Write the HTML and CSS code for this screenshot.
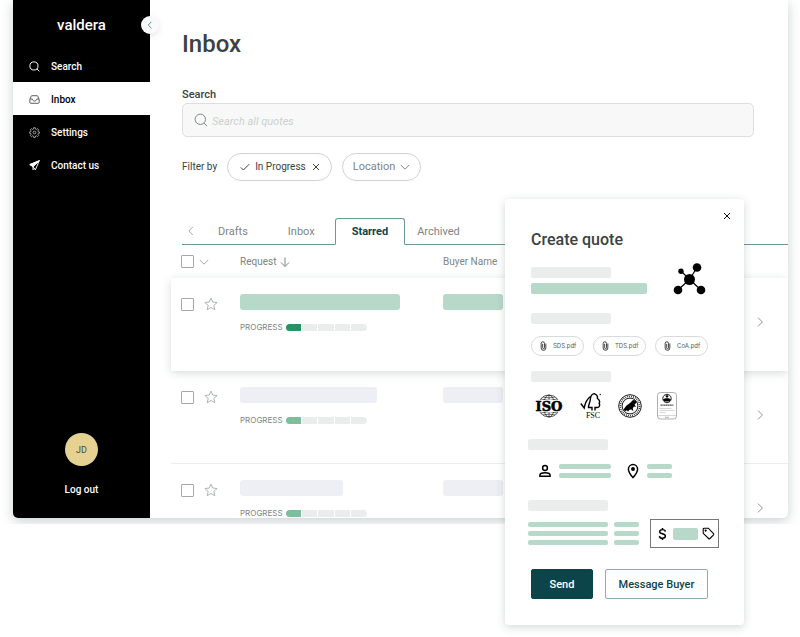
FILE: index.html
```html
<!DOCTYPE html>
<html lang="en">
<head>
    <meta charset="UTF-8">
    <meta name="viewport" content="width=device-width, initial-scale=1.0">
    <title>valdera - Inbox</title>
    <link rel="stylesheet" href="styles.css">
</head>
<body>
    <!-- shared icons -->
    <svg class="sprite" aria-hidden="true">
        <symbol id="i-search" viewBox="0 0 16 16"><circle cx="7.2" cy="7.2" r="5.9"/><path d="M11.4 11.4l3.6 3.6"/></symbol>
        <symbol id="i-star" viewBox="0 0 16 16"><path d="M8 1.2l2 4.6 5 .5-3.8 3.3 1.1 4.9L8 12l-4.3 2.5 1.1-4.9L1 6.3l5-.5z"/></symbol>
        <symbol id="i-left" viewBox="0 0 10 10"><path d="M6.8 1L2.8 5l4 4"/></symbol>
        <symbol id="i-right" viewBox="0 0 10 10"><path d="M3 .6L7.4 5 3 9.4"/></symbol>
        <symbol id="i-down" viewBox="0 0 10 10"><path d="M.8 3L5 7.2 9.2 3"/></symbol>
        <symbol id="i-close" viewBox="0 0 10 10"><path d="M2 2l6 6M8 2L2 8"/></symbol>
        <symbol id="i-clip" viewBox="0 0 8 12"><path d="M6.8 3v5.4a2.8 2.8 0 0 1-5.6 0V2.9a2 2 0 0 1 4 0v5.2a1.1 1.1 0 0 1-2.2 0V3.4"/></symbol>
    </svg>

    <div class="stage">
        <div class="app">
            <aside class="sidebar">
                <div class="logo">valdera</div>
                <button class="collapse" type="button" aria-label="Collapse menu"><svg class="icon"><use href="#i-left"/></svg></button>

                <nav class="menu">
                    <a class="menu-item" href="#"><svg class="icon"><use href="#i-search"/></svg>Search</a>
                    <a class="menu-item active" href="#">
                        <svg class="icon thin" viewBox="0 0 16 16"><path d="M1.2 8.2l2-5a1 1 0 0 1 1-.7h7.6a1 1 0 0 1 1 .7l2 5v4a1.3 1.3 0 0 1-1.3 1.3h-11a1.3 1.3 0 0 1-1.3-1.3zM1.2 7.4h3.6c.3 2 1.6 2.8 3.2 2.8s2.9-.8 3.2-2.8h3.6"/></svg>Inbox</a>
                    <a class="menu-item" href="#">
                        <svg class="icon thin" viewBox="0 0 16 16"><circle cx="8" cy="8" r="2"/><path d="M6.9 1h2.2l.4 2 1.3.6 1.7-1.2 1.6 1.6-1.2 1.7.5 1.2 2 .4v1.6l-2 .4-.5 1.3 1.2 1.7-1.6 1.6-1.7-1.2-1.3.5-.4 2H6.9l-.4-2-1.3-.5-1.7 1.2-1.6-1.6 1.2-1.7-.5-1.3-2-.4V7.3l2-.4.5-1.2L1.9 4l1.6-1.6 1.7 1.2L6.5 3z"/></svg>Settings</a>
                    <a class="menu-item" href="#">
                        <svg class="icon" viewBox="0 0 16 16"><path d="M15 1L1.2 6.6l4.6 3 3.4 4.8zM15 1L5.8 9.6v4.6l2-2"/><path class="solid" d="M15 1L5.800 9.600 1.200 6.600z"/></svg>Contact us</a>
                </nav>

                <div class="account">
                    <div class="avatar">JD</div>
                    <a class="logout" href="#">Log out</a>
                </div>
            </aside>

            <main class="main">
                <div class="toolbar">
                    <h1>Inbox</h1>
                    <label class="search-label" for="search">Search</label>
                    <div class="search-box">
                        <svg class="icon"><use href="#i-search"/></svg>
                        <input type="search" id="search" placeholder="Search all quotes">
                    </div>
                    <div class="filters">
                        <span>Filter by</span>
                        <button class="filter" type="button">
                            <svg class="icon" viewBox="0 0 10 10"><path d="M.8 5.4L3.400 8 9.200 2.200"/></svg>
                            In Progress
                            <svg class="icon"><use href="#i-close"/></svg>
                        </button>
                        <button class="filter location" type="button">Location <svg class="icon"><use href="#i-down"/></svg></button>
                    </div>
                </div>

                <nav class="tabs">
                    <a class="tab prev" href="#" aria-label="Previous"><svg class="icon"><use href="#i-left"/></svg></a>
                    <a class="tab" href="#">Drafts</a>
                    <a class="tab" href="#">Inbox</a>
                    <a class="tab active" href="#">Starred</a>
                    <a class="tab last" href="#">Archived</a>
                </nav>

                <table class="quotes">
                    <thead>
                        <tr>
                            <th class="col-pick"><div class="pick"><input type="checkbox" aria-label="Select all"><svg class="icon"><use href="#i-down"/></svg></div></th>
                            <th class="col-request"><div class="sort">Request <svg class="icon" viewBox="0 0 10 10"><path d="M5 .5v8.800M1 5.500l4 4 4-4"/></svg></div></th>
                            <th>Buyer Name</th>
                            <th class="col-open"></th>
                        </tr>
                    </thead>
                    <tbody>
                        <tr class="selected">
                            <td><div class="pick"><input type="checkbox" aria-label="Select quote 1"><svg class="icon star"><use href="#i-star"/></svg></div></td>
                            <td>
                                <div class="name" style="width: 160px"></div>
                                <div class="progress">PROGRESS <span class="steps"><i class="done"></i><i></i><i></i><i></i><i></i></span></div>
                            </td>
                            <td><div class="name buyer"></div></td>
                            <td><svg class="icon open"><use href="#i-right"/></svg></td>
                        </tr>
                        <tr>
                            <td><div class="pick"><input type="checkbox" aria-label="Select quote 2"><svg class="icon star"><use href="#i-star"/></svg></div></td>
                            <td>
                                <div class="name" style="width: 137px"></div>
                                <div class="progress">PROGRESS <span class="steps"><i class="done"></i><i></i><i></i><i></i><i></i></span></div>
                            </td>
                            <td><div class="name buyer"></div></td>
                            <td><svg class="icon open"><use href="#i-right"/></svg></td>
                        </tr>
                        <tr>
                            <td><div class="pick"><input type="checkbox" aria-label="Select quote 3"><svg class="icon star"><use href="#i-star"/></svg></div></td>
                            <td>
                                <div class="name" style="width: 103px"></div>
                                <div class="progress">PROGRESS <span class="steps"><i class="done"></i><i></i><i></i><i></i><i></i></span></div>
                            </td>
                            <td><div class="name buyer"></div></td>
                            <td><svg class="icon open"><use href="#i-right"/></svg></td>
                        </tr>
                    </tbody>
                </table>
            </main>
        </div>
    </div>

    <section class="modal" role="dialog" aria-labelledby="modal-title">
        <button class="close" type="button" aria-label="Close"><svg class="icon"><use href="#i-close"/></svg></button>

        <div class="block">
            <h2 id="modal-title">Create quote</h2>
            <div class="summary">
                <div class="summary-text">
                    <div class="bar"></div>
                    <div class="bar green"></div>
                </div>
                <svg class="molecule" viewBox="0 0 32 32">
                    <path d="M16.5 16.5L24 4.5M16.5 16.5L8 8M16.5 16.5L5 27M16.5 16.5L28 27"/>
                    <circle cx="16.5" cy="16.5" r="5.5"/><circle cx="24" cy="4.5" r="4.3"/><circle cx="8" cy="8.2" r="2.7"/><circle cx="5" cy="27" r="4.3"/><circle cx="28" cy="27" r="4.3"/>
                </svg>
            </div>
            <div class="bar files-title"></div>
            <div class="files">
                <a class="file" href="#"><svg class="icon"><use href="#i-clip"/></svg>SDS.pdf</a>
                <a class="file" href="#"><svg class="icon"><use href="#i-clip"/></svg>TDS.pdf</a>
                <a class="file" href="#"><svg class="icon"><use href="#i-clip"/></svg>CoA.pdf</a>
            </div>
            <div class="bar certs-title"></div>
            <div class="certs">
                <svg class="cert iso" viewBox="0 0 30 30">
                    <g class="line"><circle cx="15" cy="15" r="11"/><ellipse cx="15" cy="15" rx="5.5" ry="11"/><path d="M15 4v22M7 8q8 3 16 0M7 22q8-3 16 0M9 6q6 2 12 0M9 24q6-2 12 0"/></g>
                    <rect class="paper" x="0" y="9" width="30" height="12"/>
                    <text x="15" y="19.6">ISO</text>
                </svg>
                <svg class="cert fsc" viewBox="0 0 22 30">
                    <path class="stroke" d="M.8 12.500l3.400 4.500C5 12 7 8 10.500 5.500"/>
                    <path class="stroke" d="M12 19.500V16.500H8.500C8.300 13.500 10.200 11.500 10.300 8.500 10.500 5 12 3 14.200 2.600c2.400.8 3.600 2.800 3.200 4.900 2.200 1.500 2.500 3.500 1.800 4.800 1.200 2.200 0 4.200-2 4.200H15v3"/>
                    <circle class="dot" cx="20.200" cy="3.500" r=".7"/>
                    <text x="13" y="27">FSC</text>
                </svg>
                <svg class="cert frog" viewBox="0 0 24 30">
                    <circle class="ring" cx="12" cy="15" r="11.3"/><circle class="letters" cx="12" cy="15" r="9.6"/><circle class="ring" cx="12" cy="15" r="7.9"/>
                    <path d="M5.5 18.5l3-4 3.500-2.500 3-3 2.600.6 1 2-2 2 1.400 2.400-2-.4-1.200 1.600.6 3-2-1.800-2 .4-1.400 2-1-1.600-2 1z"/>
                </svg>
                <svg class="cert badge" viewBox="0 0 20 30">
                    <rect class="frame" x=".5" y="1.5" width="19" height="26.5" rx="3"/>
                    <circle class="frame dark" cx="10" cy="7.500" r="4.200"/><path d="M6 8.200l2.500-1h3l2.500 1-1.500 2.300h-5zM8.500 4.200h3L11 6.500H9z"/>
                    <path class="frame label" d="M3.500 14.200h13"/>
                    <path class="frame faint" d="M2.500 17.500h12M2.500 19.500h15M2.500 21.500h6M.5 24.500h19"/>
                    <path class="frame" d="M8 26.300h4"/>
                </svg>
            </div>
        </div>

        <div class="bar"></div>
        <div class="contact">
            <svg class="icon person" viewBox="0 0 12 14"><circle cx="6" cy="4" r="2.4"/><path d="M.9 12.200v-1C.9 9.600 3.500 8.700 6 8.700s5.100.9 5.100 2.500v1z"/></svg>
            <div class="lines"><i></i><i></i></div>
            <svg class="icon pin" viewBox="0 0 12 16"><path d="M6 14.600C3 11.200 1.400 8.500 1.400 6.200a4.600 4.600 0 0 1 9.200 0c0 2.300-1.600 5-4.600 8.400z"/><circle class="solid" cx="6" cy="6" r="1.2"/></svg>
            <div class="lines short"><i></i><i></i></div>
        </div>

        <div class="bar"></div>
        <div class="pricing">
            <div class="lines wide"><i></i><i></i><i></i></div>
            <div class="lines short"><i></i><i></i><i></i></div>
            <div class="price">
                <svg class="icon dollar" viewBox="0 0 10 16"><path d="M8.300 5.300C8.100 3.800 6.800 3 5 3 3.100 3 1.800 3.900 1.800 5.300c0 3.300 6.500 1.600 6.500 5.100C8.300 12 6.900 12.900 5 12.900s-3.300-.9-3.500-2.500M5 1v2M5 12.900v2"/></svg>
                <span class="amount"></span>
                <svg class="icon" viewBox="0 0 14 14"><path d="M1.300 2.400a1.100 1.100 0 0 1 1.100-1.100h4.400l5.600 5.800a1.100 1.100 0 0 1 0 1.500l-3.800 3.800a1.100 1.100 0 0 1-1.500 0L1.300 6.800z"/><circle class="solid" cx="3.900" cy="3.900" r=".6"/></svg>
            </div>
        </div>

        <div class="actions">
            <button class="btn primary" type="button">Send</button>
            <button class="btn" type="button">Message Buyer</button>
        </div>
    </section>
</body>
</html>
```

FILE: styles.css
```css
:root {
    --teal: #0c4549;
    --teal-line: #6d9798;
    --green: #b7d9c9;
    --grey-bar: #ebeded;
    --text-dark: #3a4243;
    --text-muted: #7d8585;
    --icon-grey: #a3a9a9;
}

* {
    box-sizing: border-box;
}

body {
    position: relative;
    margin: 0;
    min-height: 100vh;
    background: #fff;
    font-family: Roboto, "Liberation Sans", sans-serif;
    font-size: 10px;
    line-height: 14px;
    color: var(--text-dark);
}

a {
    color: inherit;
    text-decoration: none;
}

button {
    font: inherit;
    color: inherit;
    cursor: pointer;
}

.sprite {
    position: absolute;
    width: 0;
    height: 0;
}

.icon {
    flex: none;
    width: 10px;
    height: 10px;
    fill: none;
    stroke: currentColor;
    stroke-width: 1;
}

.icon .solid {
    fill: currentColor;
}

/* App window */
.stage {
    padding: 0 12px 6px 13px;
    overflow: hidden;
}

.app {
    display: flex;
    overflow: hidden;
    border-radius: 0 0 5px 5px;
    background: #fff;
    box-shadow: 0 3px 12px rgba(40, 70, 70, 0.25);
}

.sidebar {
    position: relative;
    z-index: 1;
    flex: 0 0 137px;
    display: flex;
    flex-direction: column;
    background: #000;
    color: #fff;
    font-weight: 500;
}

.logo {
    padding: 15px 0 14px;
    font-size: 15px;
    line-height: 20px;
    text-align: center;
}

.collapse {
    position: absolute;
    top: 16px;
    right: -9px;
    display: flex;
    align-items: center;
    justify-content: center;
    width: 18px;
    height: 18px;
    padding: 0;
    border: 0;
    border-radius: 50%;
    background: #fafafa;
    box-shadow: 0 2px 6px rgba(0, 0, 0, 0.1);
    color: #2f7377;
}

.collapse .icon {
    width: 8px;
    height: 8px;
}

.menu-item {
    display: flex;
    align-items: center;
    gap: 11px;
    height: 33px;
    padding: 2px 0 0 16px;
}

.menu-item .icon {
    width: 11px;
    height: 11px;
    stroke-width: 1.4;
}

.menu-item .thin {
    opacity: 0.65;
}

.menu-item.active {
    background: #fff;
    color: #000;
}

.account {
    display: flex;
    flex-direction: column;
    align-items: center;
    gap: 17px;
    margin-top: auto;
    padding-bottom: 21px;
}

.avatar {
    width: 33px;
    height: 33px;
    border-radius: 50%;
    background: #e5d292;
    color: #4a4636;
    font-size: 9px;
    font-weight: 400;
    line-height: 34px;
    text-align: center;
}

/* Main column */
.main {
    position: relative;
    z-index: 0;
    flex: 1;
    min-width: 0;
}

.toolbar {
    padding: 28px 34px 37px 32px;
}

h1 {
    margin: 0 0 28px;
    font-size: 24px;
    font-weight: 500;
    line-height: 32px;
}

.search-label {
    display: block;
    margin-bottom: 1px;
    font-size: 11px;
    font-weight: 500;
}

.search-box {
    display: flex;
    align-items: center;
    gap: 4px;
    height: 34px;
    padding: 0 11px;
    border: 1px solid #dcdfdf;
    border-radius: 5px;
    background: #f8f8f8;
    color: #6f7777;
}

.search-box .icon {
    width: 14px;
    height: 14px;
}

.search-box input {
    flex: 1;
    min-width: 0;
    height: 16px;
    padding: 2px 0 0;
    border: 0;
    outline: 0;
    background: none;
    font: italic 11px/14px Roboto, "Liberation Sans", sans-serif;
    color: var(--text-dark);
}

.search-box input::placeholder {
    color: #cdd0d0;
}

.filters {
    display: flex;
    align-items: center;
    gap: 10px;
    margin-top: 16px;
}

.filter {
    display: flex;
    align-items: center;
    gap: 5px;
    height: 28px;
    padding: 0 10px 0 12px;
    border: 1px solid #cfd3d3;
    border-radius: 14px;
    background: #fff;
}

.filter.location {
    padding: 0 10px;
    font-size: 11px;
    color: var(--text-muted);
}

/* Tabs */
.tabs {
    display: flex;
    height: 27px;
    margin-left: 32px;
    font-size: 11px;
    color: var(--text-muted);
}

.tab {
    display: flex;
    align-items: center;
    padding: 1px 20px 0;
    border-bottom: 1px solid var(--teal-line);
}

.tab.prev {
    padding: 0 2px 0 4px;
    color: var(--icon-grey);
}

.tab.active {
    padding: 0 16px;
    border: 1px solid var(--teal-line);
    border-bottom-color: transparent;
    border-radius: 3px 3px 0 0;
    color: var(--teal);
    font-weight: 700;
}

.tab.last {
    flex: 1;
    padding: 1px 12px 0;
}

/* Quotes table */
.quotes {
    width: calc(100% - 21px);
    margin-left: 21px;
    border-spacing: 0;
    table-layout: fixed;
}

.quotes th {
    height: 33px;
    padding: 0;
    font-weight: 400;
    text-align: left;
    color: var(--text-muted);
}

.quotes td {
    height: 93px;
    padding: 16px 0 0;
    vertical-align: top;
    border-bottom: 1px solid #eceeee;
}

.quotes tr.selected {
    border-radius: 4px;
    background: #fff;
    box-shadow: 0 2px 10px rgba(40, 60, 60, 0.18);
}

.quotes .selected td {
    border-bottom: 0;
}

.quotes tr:last-child td {
    height: auto;
    border-bottom: 0;
}

.col-pick {
    width: 69px;
}

.col-request {
    width: 203px;
}

.col-open {
    width: 33px;
}

.pick {
    display: flex;
    align-items: center;
    gap: 5px;
    padding-left: 10px;
    color: var(--icon-grey);
}

td .pick {
    gap: 10px;
    padding-top: 3px;
}

.pick input {
    appearance: none;
    width: 13px;
    height: 13px;
    margin: 0;
    border: 1px solid var(--icon-grey);
    border-radius: 1px;
    background: #fff;
}

.star {
    width: 14px;
    height: 14px;
}

.sort {
    display: flex;
    align-items: center;
    gap: 4px;
}

.name {
    height: 16px;
    margin-bottom: 12px;
    border-radius: 3px;
    background: #eeeff4;
}

.name.buyer {
    width: 60px;
}

.selected .name {
    background: var(--green);
}

.progress {
    display: flex;
    align-items: center;
    gap: 3px;
    font-family: Inter, sans-serif;
    font-size: 8px;
    line-height: 10px;
    color: var(--text-muted);
}

.steps {
    display: flex;
    gap: 1px;
    width: 81px;
    height: 7px;
    overflow: hidden;
    border-radius: 4px;
}

.steps i {
    flex: 1;
    background: var(--grey-bar);
}

.steps .done {
    background: #7fbd9f;
}

.selected .steps .done {
    background: #2a9164;
}

.open {
    margin-top: 23px;
    color: #8d9494;
}

/* Create quote dialog */
.modal {
    position: absolute;
    z-index: 2;
    top: 199px;
    right: 56px;
    display: flex;
    flex-direction: column;
    width: 239px;
    padding: 11px 23px 26px;
    border-radius: 4px;
    background: #fff;
    box-shadow: 0 2px 10px rgba(40, 60, 60, 0.2);
}

.close {
    align-self: flex-end;
    display: flex;
    margin-right: -12px;
    padding: 1px;
    border: 0;
    background: none;
    color: #111;
}

.block {
    padding-left: 3px;
}

h2 {
    margin: 8px 0 13px;
    font-size: 16px;
    font-weight: 500;
    line-height: 20px;
}

.bar {
    width: 80px;
    height: 11px;
    border-radius: 2px;
    background: var(--grey-bar);
}

.bar.green {
    width: 100%;
    background: var(--green);
}

.summary {
    display: flex;
    gap: 26px;
    margin-bottom: 18px;
}

.summary-text {
    display: flex;
    flex-direction: column;
    gap: 5px;
    width: 116px;
    padding-top: 4px;
}

.molecule {
    width: 32px;
    height: 32px;
    overflow: visible;
    stroke: #000;
    stroke-width: 1.2;
}

.molecule circle {
    stroke: none;
}

.files {
    display: flex;
    gap: 9px;
    margin: 12px 0 15px;
}

.file {
    display: flex;
    align-items: center;
    gap: 6px;
    width: 53px;
    height: 20px;
    padding-left: 8px;
    border: 1px solid #d8dbdb;
    border-radius: 10px;
    font-family: Inter, sans-serif;
    font-size: 6px;
    line-height: 10px;
    color: #555d5d;
}

.file .icon {
    width: 7px;
    height: 10px;
    color: #222;
}

.certs {
    display: flex;
    align-items: center;
    margin: 9px 0 18px;
    padding-left: 3px;
}

.cert {
    height: 30px;
}

.cert .line,
.cert .stroke,
.cert .ring,
.cert .letters,
.cert .frame {
    fill: none;
    stroke: #000;
}

.cert .paper {
    fill: #fff;
}

.cert text {
    font-family: "Liberation Serif", serif;
    font-weight: 700;
    text-anchor: middle;
}

.iso {
    width: 30px;
    margin-right: 16px;
}

.iso .line {
    stroke-width: 0.6;
}

.cert.iso text {
    font-family: "DejaVu Serif", serif;
    font-size: 13px;
    stroke: #000;
    stroke-width: 0.6;
}

.fsc {
    width: 22px;
    margin-right: 16px;
}

.fsc .stroke {
    stroke-width: 1.4;
}

.cert.fsc text {
    font-size: 8px;
    font-weight: 400;
}

.frog {
    width: 24px;
    margin-right: 15px;
}

.frog .ring {
    stroke-width: 0.9;
}

.cert.frog .letters {
    stroke: #444;
    stroke-width: 1.6;
    stroke-dasharray: 1 1;
}

.badge {
    width: 20px;
}

.cert .frame {
    stroke: #8b8f8f;
    stroke-width: 0.7;
}

.cert .frame.dark {
    stroke: #222;
    stroke-width: 1;
}

.cert .frame.label {
    stroke: #444;
    stroke-width: 1.2;
    stroke-dasharray: 1.4 0.4;
}

.cert .frame.faint {
    stroke: #c3c6c6;
}

.contact {
    display: flex;
    align-items: center;
    height: 18px;
    margin: 12px 0 20px;
    padding-left: 11px;
    color: #000;
}

.contact .icon {
    stroke-width: 1.5;
}

.contact .person {
    width: 12px;
    height: 14px;
    margin-right: 8px;
}

.contact .pin {
    width: 12px;
    height: 16px;
    margin: 0 8px 0 16px;
}

.lines {
    display: flex;
    flex-direction: column;
    gap: 4px;
    width: 52px;
}

.lines i {
    height: 5px;
    border-radius: 2px;
    background: var(--green);
}

.lines.wide {
    width: 80px;
}

.lines.short {
    width: 25px;
}

.pricing {
    display: flex;
    align-items: center;
    gap: 6px;
    margin: 8px -3px 21px 0;
}

.price {
    display: flex;
    align-items: center;
    gap: 4px;
    width: 69px;
    height: 29px;
    margin-left: 5px;
    padding: 0 3px 0 7px;
    border: 1px solid #777;
    color: #000;
}

.price .icon {
    width: 13px;
    height: 13px;
    stroke-width: 1.2;
}

.price .dollar {
    width: 9px;
    height: 14px;
    margin-right: 2px;
    stroke-width: 1.7;
}

.amount {
    flex: 1;
    height: 12px;
    border-radius: 2px;
    background: var(--green);
}

.actions {
    display: flex;
    gap: 12px;
    padding-left: 3px;
}

.btn {
    width: 103px;
    height: 30px;
    padding: 1px 0 0;
    border: 1px solid #8eafb0;
    border-radius: 2px;
    background: #fff;
    color: var(--teal);
    font-size: 11px;
    font-weight: 500;
}

.btn.primary {
    width: 62px;
    border-color: var(--teal);
    background: var(--teal);
    color: #fff;
}
```
